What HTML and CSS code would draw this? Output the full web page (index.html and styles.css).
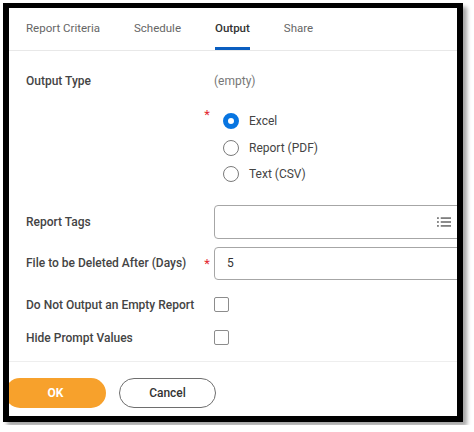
FILE: index.html
```html
<!DOCTYPE html>
<html lang="en">
<head>
  <meta charset="UTF-8">
  <title>Report Output</title>
  <link rel="stylesheet" href="styles.css">
</head>
<body>

  <div class="dialog">
    <div class="tabs">
      <div class="tab">Report Criteria</div>
      <div class="tab">Schedule</div>
      <div class="tab active">Output</div>
      <div class="tab">Share</div>
    </div>

    <div class="form">
      <div class="row row-type">
        <div class="label">Output Type</div>
        <div class="req"></div>
        <div class="value muted">(empty)</div>
      </div>

      <div class="row row-radios">
        <div class="label"></div>
        <div class="req">*</div>
        <div class="radios">
          <div class="radio checked"><span class="dot"></span>Excel</div>
          <div class="radio"><span class="dot"></span>Report (PDF)</div>
          <div class="radio"><span class="dot"></span>Text (CSV)</div>
        </div>
      </div>

      <div class="row row-tags">
        <div class="label">Report Tags</div>
        <div class="req"></div>
        <div class="input">
          <svg class="list-icon" width="15" height="12" viewBox="0 0 15 12">
            <rect x="0" y="1" width="2" height="1.6" fill="#666"/>
            <rect x="4" y="1" width="11" height="1.6" fill="#666"/>
            <rect x="0" y="5.2" width="2" height="1.6" fill="#666"/>
            <rect x="4" y="5.2" width="11" height="1.6" fill="#666"/>
            <rect x="0" y="9.4" width="2" height="1.6" fill="#666"/>
            <rect x="4" y="9.4" width="11" height="1.6" fill="#666"/>
          </svg>
        </div>
      </div>

      <div class="row row-days">
        <div class="label">File to be Deleted After (Days)</div>
        <div class="req">*</div>
        <div class="input">5</div>
      </div>

      <div class="row row-check">
        <div class="label">Do Not Output an Empty Report</div>
        <div class="req"></div>
        <div class="value"><span class="check"></span></div>
      </div>

      <div class="row row-check2">
        <div class="label">Hide Prompt Values</div>
        <div class="req"></div>
        <div class="value"><span class="check"></span></div>
      </div>
    </div>

    <div class="footer">
      <button class="btn ok">OK</button>
      <button class="btn cancel">Cancel</button>
    </div>
  </div>

</body>
</html>
```

FILE: styles.css
```css
body, html { margin: 0; background: #fff; }
body { font-family: Roboto, "Liberation Sans", sans-serif; font-size: 12px; color: #333; }

.dialog {
  margin: 3px;
  width: 448px;
  height: 408px;
  border: 6px solid #000;
  border-top-width: 5px;
  background: #fff;
  overflow: hidden;
  box-shadow: 4px 4px 4px rgba(0,0,0,0.35);
}

.tabs {
  display: flex;
  gap: 34px;
  height: 42px;
  padding-left: 17px;
  border-bottom: 1px solid #e8e8e8;
}
.tab {
  box-sizing: border-box;
  height: 42px;
  padding-top: 12px;
  line-height: 16px;
  font-size: 11.5px;
  color: #666;
  border-bottom: 3px solid transparent;
}
.tab.active { color: #333; font-weight: 500; border-bottom-color: #0a5ec0; }

.form { padding: 15px 0 0 17px; }
.row {
  display: grid;
  grid-template-columns: 174px 14px 1fr;
  align-items: center;
}
.label { font-weight: 500; color: #444; }
.req { color: #e3262f; font-size: 13px; text-align: center; }
.muted { color: #777; }

.row-type { height: 30px; }
.row-radios { margin-top: 12px; align-items: start; }
.row-radios .req { line-height: 14px; }
.row-tags { margin-top: 17px; }
.row-days { margin-top: 8px; }
.row-check { margin-top: 12px; height: 26px; }
.row-check2 { margin-top: 7px; height: 26px; }

.radios { display: flex; flex-direction: column; }
.radio {
  display: flex;
  align-items: center;
  gap: 10px;
  height: 26.5px;
  padding-left: 9px;
  color: #444;
}
.dot {
  box-sizing: border-box;
  width: 16px;
  height: 16px;
  border: 1px solid #7a7a7a;
  border-radius: 50%;
}
.radio.checked .dot { border: 5px solid #0875e1; }

.input {
  box-sizing: border-box;
  display: flex;
  align-items: center;
  width: 250px;
  height: 34px;
  padding: 0 12px;
  border: 1px solid #a6a6a6;
  border-radius: 4px;
  color: #333;
}
.row-days .input { height: 33px; }
.list-icon { margin-left: 210px; }

.check {
  display: block;
  box-sizing: border-box;
  width: 15px;
  height: 15px;
  border: 1px solid #8c8c8c;
  border-radius: 2px;
}

.footer {
  margin-top: 10px;
  border-top: 1px solid #eee;
  padding-top: 16px;
  display: flex;
  gap: 13px;
  margin-left: -4px;
}
.btn {
  box-sizing: border-box;
  width: 101px;
  height: 30px;
  border-radius: 15px;
  font-family: inherit;
  font-size: 12px;
  font-weight: 500;
  cursor: pointer;
}
.ok { background: #f7a12c; border: none; color: #fff; font-weight: 700; }
.cancel { width: 97px; background: #fff; border: 1px solid #6e6e6e; color: #333; }
```
